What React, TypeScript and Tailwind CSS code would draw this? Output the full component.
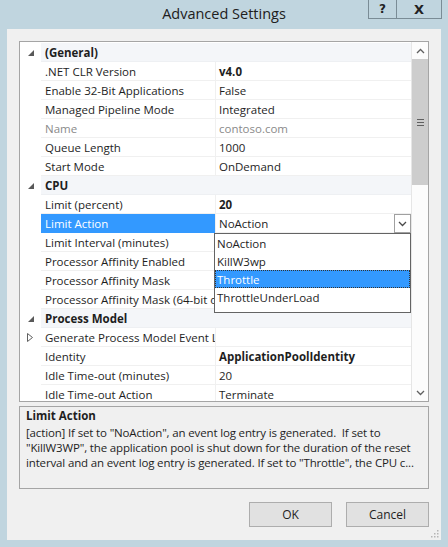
import React from "react";

type Row =
  | { kind: "cat"; label: string }
  | {
      kind: "prop";
      label: string;
      value?: string;
      bold?: boolean;
      dim?: boolean;
      selected?: boolean;
      expand?: boolean;
      spill?: boolean;
    };

// values of rows covered by the open drop-down are left out: they are hidden in the picture
const rows: Row[] = [
  { kind: "cat", label: "(General)" },
  { kind: "prop", label: ".NET CLR Version", value: "v4.0", bold: true },
  { kind: "prop", label: "Enable 32-Bit Applications", value: "False" },
  { kind: "prop", label: "Managed Pipeline Mode", value: "Integrated" },
  { kind: "prop", label: "Name", value: "contoso.com", dim: true },
  { kind: "prop", label: "Queue Length", value: "1000" },
  { kind: "prop", label: "Start Mode", value: "OnDemand" },
  { kind: "cat", label: "CPU" },
  { kind: "prop", label: "Limit (percent)", value: "20", bold: true },
  { kind: "prop", label: "Limit Action", value: "NoAction", selected: true },
  { kind: "prop", label: "Limit Interval (minutes)" },
  { kind: "prop", label: "Processor Affinity Enabled" },
  { kind: "prop", label: "Processor Affinity Mask" },
  { kind: "prop", label: "Processor Affinity Mask (64-bit o", spill: true },
  { kind: "cat", label: "Process Model" },
  { kind: "prop", label: "Generate Process Model Event Log Entry", value: "", expand: true },
  { kind: "prop", label: "Identity", value: "ApplicationPoolIdentity", bold: true },
  { kind: "prop", label: "Idle Time-out (minutes)", value: "20" },
  { kind: "prop", label: "Idle Time-out Action", value: "Terminate" },
];

const options = ["NoAction", "KillW3wp", "Throttle", "ThrottleUnderLoad"];

function Chevron({ dir, className }: { dir: "up" | "down"; className?: string }) {
  return (
    <svg width="9" height="6" viewBox="0 0 9 6" className={className}>
      <path
        d={dir === "up" ? "M1 5 L4.5 1.5 L8 5" : "M1 1 L4.5 4.5 L8 1"}
        fill="none"
        stroke="currentColor"
        strokeWidth="1.3"
      />
    </svg>
  );
}

function Gutter({ row }: { row: Row }) {
  if (row.kind === "cat") {
    return (
      <svg width="6" height="6" viewBox="0 0 6 6" className="text-[#595959]">
        <polygon points="6,0 6,6 0,6" fill="currentColor" />
      </svg>
    );
  }
  if (row.expand) {
    return (
      <svg width="6" height="9" viewBox="0 0 6 9" className="text-[#606060]">
        <polygon points="0.5,0.5 5.5,4.5 0.5,8.5" fill="none" stroke="currentColor" />
      </svg>
    );
  }
  return null;
}

function PropertyRow({ row }: { row: Row }) {
  if (row.kind === "cat") {
    return (
      <div className="flex h-[19px] shrink-0">
        <div className="flex w-[21px] items-center justify-end pr-[7px]">
          <Gutter row={row} />
        </div>
        <div className="flex flex-1 items-center border-b border-[#eef0f3] bg-[#f4f6f9] pl-[4px] font-bold text-[#1e1e1e]">
          {row.label}
        </div>
      </div>
    );
  }
  const nameTone = row.dim ? "text-[#8a8a8a]" : "text-[#1e1e1e]";
  return (
    <div className="flex h-[19px] shrink-0">
      <div className="flex w-[21px] items-center justify-end pr-[8px]">
        <Gutter row={row} />
      </div>
      <div
        className={
          row.selected
            ? "flex w-[174px] items-center overflow-hidden whitespace-nowrap border-b border-[#3399ff] bg-[#3399ff] pl-[4px] text-white"
            : row.spill
              ? "flex w-[174px] items-center whitespace-nowrap border-b border-[#f0f0f0] pl-[4px] " + nameTone
              : "flex w-[174px] items-center overflow-hidden whitespace-nowrap border-b border-[#f0f0f0] pl-[4px] " + nameTone
        }
      >
        {row.label}
      </div>
      <div className="w-px bg-[#f0f0f0]" />
      <div className="flex flex-1 items-center justify-between border-b border-[#f0f0f0] pl-[3px]">
        <span className={(row.bold ? "font-bold " : "") + nameTone}>{row.value}</span>
        {row.selected ? (
          <div className="mb-[-1px] flex h-[19px] w-[17px] items-center justify-center border border-[#a0a0a0] bg-white text-[#4a4a4a]">
            <Chevron dir="down" />
          </div>
        ) : null}
      </div>
    </div>
  );
}

export default function App() {
  return (
    <div className="flex h-[547px] w-[448px] flex-col overflow-hidden bg-[#c0d5df] font-['Open_Sans','Noto_Sans',sans-serif] text-[11.5px] leading-[15px] text-[#1e1e1e]">
      <div className="grid h-[29px] shrink-0 grid-cols-[1fr_auto_1fr]">
        <div />
        <div className="self-center pb-[2px] text-[14.5px] leading-[20px] text-[#202020]">Advanced Settings</div>
        <div className="flex justify-end pr-[6px]">
          <div className="flex h-[19px] w-[29px] items-center justify-center border-x border-b border-[#7a8c96] font-['DejaVu_Sans',sans-serif] text-[12px] font-bold text-[#222]">
            ?
          </div>
          <div className="flex h-[19px] w-[45px] items-center justify-center border-r border-b border-[#7a8c96] font-['DejaVu_Sans',sans-serif] text-[13px] font-bold text-[#222]">
            X
          </div>
        </div>
      </div>

      <div className="relative mx-[7px] mb-[7px] flex flex-1 flex-col bg-[#f0f0f0] px-[12px] pt-[12px]">
        {/* property grid */}
        <div className="flex h-[361px] shrink-0 border border-[#a5a5a5] bg-white">
          <div className="relative flex flex-1 flex-col overflow-hidden pt-[1px]">
            {rows.map((row) => (
              <PropertyRow key={row.label} row={row} />
            ))}

            <div className="absolute left-[194px] top-[191px] h-[80px] w-[197px] border border-[#646464] bg-white">
              {options.map((opt) => (
                <div
                  key={opt}
                  className={
                    opt === "Throttle"
                      ? "flex h-[18px] items-center border border-dotted border-[#333] bg-[#3399ff] pl-[1px] text-white"
                      : "flex h-[18px] items-center pl-[2px]"
                  }
                >
                  {opt}
                </div>
              ))}
            </div>
          </div>

          {/* scrollbar */}
          <div className="flex w-[17px] flex-col border-l border-[#e6e6e6] bg-[#fcfcfc]">
            <div className="flex h-[17px] items-center justify-center text-[#606060]">
              <Chevron dir="up" />
            </div>
            <div className="flex h-[126px] flex-col items-center justify-center gap-[2px] bg-[#cdcdcd]">
              <div className="h-px w-[7px] bg-[#606060]" />
              <div className="h-px w-[7px] bg-[#606060]" />
              <div className="h-px w-[7px] bg-[#606060]" />
            </div>
            <div className="flex-1" />
            <div className="flex h-[17px] items-center justify-center text-[#606060]">
              <Chevron dir="down" />
            </div>
          </div>
        </div>

        {/* description */}
        <div className="mt-[4px] h-[83px] shrink-0 border border-[#a5a5a5] px-[6px] pt-[1px]">
          <div className="font-bold">Limit Action</div>
          <p className="mt-[2px] whitespace-nowrap tracking-[-0.15px]">
            [action] If set to "NoAction", an event log entry is generated.&nbsp; If set to
            <br />
            "KillW3WP", the application pool is shut down for the duration of the reset
            <br />
            interval and an event log entry is generated. If set to "Throttle", the CPU c...
          </p>
        </div>

        {/* buttons */}
        <div className="mt-[13px] flex justify-end gap-[14px]">
          <button className="h-[25px] w-[83px] border border-[#adadad] bg-[#e1e1e1] text-[12px]">OK</button>
          <button className="h-[25px] w-[83px] border border-[#adadad] bg-[#e1e1e1] text-[12px]">Cancel</button>
        </div>

        <svg width="8" height="8" viewBox="0 0 8 8" className="absolute bottom-[2px] right-[2px] text-[#b5b5b5]">
          <rect x="6" y="0" width="1.5" height="1.5" fill="currentColor" />
          <rect x="3" y="3" width="1.5" height="1.5" fill="currentColor" />
          <rect x="6" y="3" width="1.5" height="1.5" fill="currentColor" />
          <rect x="0" y="6" width="1.5" height="1.5" fill="currentColor" />
          <rect x="3" y="6" width="1.5" height="1.5" fill="currentColor" />
          <rect x="6" y="6" width="1.5" height="1.5" fill="currentColor" />
        </svg>
      </div>
    </div>
  );
}
